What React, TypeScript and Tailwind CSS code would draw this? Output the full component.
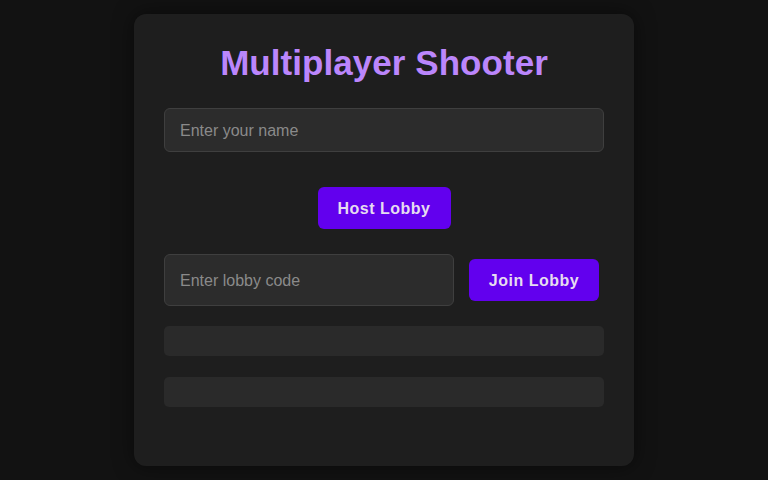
export default function App() {
  return (
    <div
      className="w-[768px] h-[480px] bg-[#121212] flex justify-center pt-[14px]"
      style={{ fontFamily: '"Liberation Sans", Arial, sans-serif' }}
    >
      <div className="w-[500px] h-[452px] bg-[#1e1e1e] rounded-[12px] shadow-[0_0_20px_rgba(0,0,0,0.5)] px-[30px] flex flex-col">
        <h1 className="text-[35px] leading-[40px] font-bold text-[#bb86fc] text-center mt-[29px] tracking-[0.05px]">
          Multiplayer Shooter
        </h1>
        <input
          className="mt-[25px] h-[44px] w-full bg-[#2c2c2c] border border-[#3f3f3f] rounded-[6px] px-[15px] pt-[2px] text-[16px] text-[#e0e0e0] placeholder:text-[#8a8a8a] outline-none"
          placeholder="Enter your name"
        />
        <div className="flex justify-center mt-[35px]">
          <button className="h-[42px] w-[133px] pt-[2px] bg-[#6200ee] rounded-[6px] text-[16px] font-bold tracking-[0.5px] text-[#e6dcf0]">
            Host Lobby
          </button>
        </div>
        <div className="flex items-center mt-[25px] gap-[15px]">
          <input
            className="h-[52px] w-[290px] bg-[#2c2c2c] border border-[#3f3f3f] rounded-[6px] px-[15px] pt-[2px] text-[16px] text-[#e0e0e0] placeholder:text-[#8a8a8a] outline-none"
            placeholder="Enter lobby code"
          />
          <button className="h-[42px] w-[130px] pt-[2px] bg-[#6200ee] rounded-[6px] text-[16px] font-bold tracking-[0.5px] text-[#e6dcf0]">
            Join Lobby
          </button>
        </div>
        <div className="mt-[20px] h-[30px] w-full bg-[#2a2a2a] rounded-[5px]" />
        <div className="mt-[21px] h-[30px] w-full bg-[#2a2a2a] rounded-[5px]" />
      </div>
    </div>
  );
}
